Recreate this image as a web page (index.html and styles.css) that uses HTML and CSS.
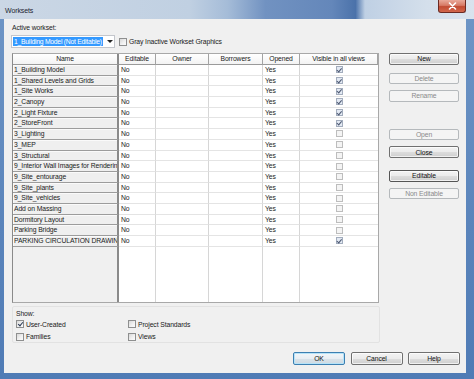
FILE: index.html
```html
<!DOCTYPE html>
<html lang="en">
<head>
    <meta charset="UTF-8">
    <title>Worksets</title>
    <link rel="stylesheet" href="styles.css">
</head>
<body>

    <div class="window">
        <div class="titlebar">
            <span class="title">Worksets</span>
            <div class="close-btn">
                <svg width="9" height="8" viewBox="0 0 9 8"><path d="M1.5 1 L7.5 7 M7.5 1 L1.5 7" stroke="#fff" stroke-width="1.6" stroke-linecap="round"/></svg>
            </div>
        </div>

        <div class="client">
            <div class="label">Active workset:</div>

            <div class="workset-row">
                <div class="combo">
                    <span class="combo-value">1_Building Model (Not Editable)</span>
                    <span class="combo-arrow"></span>
                </div>
                <div class="check"><span class="box"></span>Gray Inactive Workset Graphics</div>
            </div>

            <div class="main">
                <div class="grid">
                    <div class="row head">
                        <div class="c name">Name</div>
                        <div class="c">Editable</div>
                        <div class="c">Owner</div>
                        <div class="c">Borrowers</div>
                        <div class="c">Opened</div>
                        <div class="c">Visible in all views</div>
                    </div>
                    <div class="row"><div class="c name">1_Building Model</div><div class="c">No</div><div class="c"></div><div class="c"></div><div class="c">Yes</div><div class="c vis"><span class="tick on"></span></div></div>
                    <div class="row"><div class="c name">1_Shared Levels and Grids</div><div class="c">No</div><div class="c"></div><div class="c"></div><div class="c">Yes</div><div class="c vis"><span class="tick on"></span></div></div>
                    <div class="row"><div class="c name">1_Site Works</div><div class="c">No</div><div class="c"></div><div class="c"></div><div class="c">Yes</div><div class="c vis"><span class="tick on"></span></div></div>
                    <div class="row"><div class="c name">2_Canopy</div><div class="c">No</div><div class="c"></div><div class="c"></div><div class="c">Yes</div><div class="c vis"><span class="tick on"></span></div></div>
                    <div class="row"><div class="c name">2_Light Fixture</div><div class="c">No</div><div class="c"></div><div class="c"></div><div class="c">Yes</div><div class="c vis"><span class="tick on"></span></div></div>
                    <div class="row"><div class="c name">2_StoreFront</div><div class="c">No</div><div class="c"></div><div class="c"></div><div class="c">Yes</div><div class="c vis"><span class="tick on"></span></div></div>
                    <div class="row"><div class="c name">3_Lighting</div><div class="c">No</div><div class="c"></div><div class="c"></div><div class="c">Yes</div><div class="c vis"><span class="tick"></span></div></div>
                    <div class="row"><div class="c name">3_MEP</div><div class="c">No</div><div class="c"></div><div class="c"></div><div class="c">Yes</div><div class="c vis"><span class="tick"></span></div></div>
                    <div class="row"><div class="c name">3_Structural</div><div class="c">No</div><div class="c"></div><div class="c"></div><div class="c">Yes</div><div class="c vis"><span class="tick"></span></div></div>
                    <div class="row"><div class="c name">9_Interior Wall Images for Rendering</div><div class="c">No</div><div class="c"></div><div class="c"></div><div class="c">Yes</div><div class="c vis"><span class="tick"></span></div></div>
                    <div class="row"><div class="c name">9_Site_entourage</div><div class="c">No</div><div class="c"></div><div class="c"></div><div class="c">Yes</div><div class="c vis"><span class="tick"></span></div></div>
                    <div class="row"><div class="c name">9_Site_plants</div><div class="c">No</div><div class="c"></div><div class="c"></div><div class="c">Yes</div><div class="c vis"><span class="tick"></span></div></div>
                    <div class="row"><div class="c name">9_Site_vehicles</div><div class="c">No</div><div class="c"></div><div class="c"></div><div class="c">Yes</div><div class="c vis"><span class="tick"></span></div></div>
                    <div class="row"><div class="c name">Add on Massing</div><div class="c">No</div><div class="c"></div><div class="c"></div><div class="c">Yes</div><div class="c vis"><span class="tick"></span></div></div>
                    <div class="row"><div class="c name">Dormitory Layout</div><div class="c">No</div><div class="c"></div><div class="c"></div><div class="c">Yes</div><div class="c vis"><span class="tick"></span></div></div>
                    <div class="row"><div class="c name">Parking Bridge</div><div class="c">No</div><div class="c"></div><div class="c"></div><div class="c">Yes</div><div class="c vis"><span class="tick"></span></div></div>
                    <div class="row"><div class="c name">PARKING CIRCULATION DRAWING</div><div class="c">No</div><div class="c"></div><div class="c"></div><div class="c">Yes</div><div class="c vis"><span class="tick on"></span></div></div>
                    <div class="row filler">
                        <div class="c name"></div><div class="c"></div><div class="c"></div><div class="c"></div><div class="c"></div><div class="c"></div>
                    </div>
                </div>

                <div class="side-buttons">
                    <button class="btn">New</button>
                    <button class="btn gap-small" disabled>Delete</button>
                    <button class="btn" disabled>Rename</button>
                    <button class="btn gap-big" disabled>Open</button>
                    <button class="btn">Close</button>
                    <button class="btn gap-mid focus">Editable</button>
                    <button class="btn" disabled>Non Editable</button>
                </div>
            </div>

            <div class="show-group">
                <div class="show-title">Show:</div>
                <div class="show-options">
                    <div class="check"><span class="box checked"></span>User-Created</div>
                    <div class="check"><span class="box"></span>Project Standards</div>
                    <div class="check"><span class="box"></span>Families</div>
                    <div class="check"><span class="box"></span>Views</div>
                </div>
            </div>

            <div class="dialog-buttons">
                <button class="btn default">OK</button>
                <button class="btn">Cancel</button>
                <button class="btn">Help</button>
            </div>
        </div>
    </div>

</body>
</html>
```

FILE: styles.css
```css
/* Page reset */
html, body {
    margin: 0;
    padding: 0;
    width: 474px;
    height: 379px;
    overflow: hidden;
    font-family: "Liberation Sans", Arial, sans-serif;
    font-size: 6.8px;
    letter-spacing: -0.1px;
    color: #1a1a1a;
}

/* Window frame (Aero style) */
.window {
    width: 474px;
    height: 379px;
    display: flex;
    flex-direction: column;
    background: linear-gradient(to bottom, #6f96c6 0%, #5a84bb 60%, #4f7bb5 100%);
}

.titlebar {
    height: 19px;
    flex: none;
    display: flex;
    align-items: center;
    padding-left: 5px;
    position: relative;
    background: linear-gradient(to right, #cbd7e5 0%, #c0d0e2 40%, #a5bcd8 48%, #7192c1 56%, #6487ba 70%, #4b72aa 75%, #bfd0e4 77%, #d4dfeb 90%, #d9e3ee 100%);
}

.title {
    font-size: 7px;
    color: #1c2430;
    padding-top: 1px;
}

.close-btn {
    position: absolute;
    top: 0;
    left: 438px;
    width: 28px;
    height: 13px;
    border: 1px solid #6b2a22;
    border-top: none;
    border-radius: 0 0 3px 3px;
    box-sizing: border-box;
    background: linear-gradient(to bottom, #e9a99a 0%, #d77a66 45%, #c24b33 55%, #d2674c 100%);
    display: flex;
    justify-content: center;
    align-items: center;
}

/* Dialog client area */
.client {
    flex: 1;
    margin: 0 8px 6px 4px;
    background: #f0f0f0;
    padding: 4px 6px 0 8px;
    box-sizing: border-box;
    display: flex;
    flex-direction: column;
}

.label {
    line-height: 9px;
    height: 9px;
}

/* Active workset row */
.workset-row {
    margin-top: 3px;
    height: 13px;
    display: flex;
    align-items: center;
}

.combo {
    width: 104px;
    height: 13px;
    margin-left: -1px;
    box-sizing: border-box;
    border: 1px solid #c3c6cc;
    background: #fff;
    display: flex;
    align-items: center;
    padding: 1px;
}

.combo-value {
    background: #3399ff;
    color: #fff;
    height: 9px;
    line-height: 9px;
    width: 91px;
    padding-left: 1px;
    letter-spacing: -0.25px;
    white-space: nowrap;
    overflow: hidden;
    box-sizing: border-box;
}

.combo-arrow {
    margin-left: 4px;
    width: 0;
    height: 0;
    border-left: 3px solid transparent;
    border-right: 3px solid transparent;
    border-top: 3px solid #222;
}

.check {
    display: flex;
    align-items: center;
    white-space: nowrap;
}

.workset-row .check {
    margin-left: 4px;
}

.box {
    width: 8px;
    height: 8px;
    box-sizing: border-box;
    border: 1px solid #8e8f8f;
    background: linear-gradient(135deg, #d8d8d8 0%, #f2f2f2 60%, #fbfbfb 100%);
    margin-right: 2px;
    position: relative;
    flex: none;
}

.box.checked::after,
.tick.on::after {
    content: "";
    position: absolute;
    left: 2px;
    top: 0px;
    width: 2px;
    height: 4px;
    border-right: 1px solid #2b3a55;
    border-bottom: 1px solid #2b3a55;
    transform: rotate(40deg);
}

/* Main area: grid + buttons */
.main {
    margin-top: 5px;
    height: 250px;
    display: flex;
    gap: 10px;
}

.grid {
    width: 367px;
    height: 250px;
    box-sizing: border-box;
    border: 1px solid #a8a8a8;
    border-left-color: #8a8a8a;
    background: #fff;
    display: flex;
    flex-direction: column;
}

.row {
    display: grid;
    grid-template-columns: 106px 37px 53px 54px 37px 1fr;
    height: 10.7px;
    flex: none;
}

.row.head {
    height: 11px;
}

.row.filler {
    flex: 1;
}

.c {
    box-sizing: border-box;
    border-right: 1px solid #d6d6d6;
    border-bottom: 1px solid #e4e4e4;
    padding-left: 2px;
    line-height: 10px;
    white-space: nowrap;
    overflow: hidden;
}

.c:last-child {
    border-right: none;
}

.c.name {
    background: #efefef;
    border-right: 2px solid #8a8a8a;
    border-bottom: 1px solid #9c9c9c;
    box-shadow: inset 1px 1px 0 #fafafa;
    padding-left: 1px;
}

.head .c {
    background: linear-gradient(to bottom, #ffffff 0%, #f3f3f3 100%);
    border-right: 1px solid #a3a3a3;
    border-bottom: 1px solid #9a9a9a;
    text-align: center;
    padding-left: 0;
    box-shadow: none;
}

.head .c.name {
    border-right: 2px solid #8a8a8a;
}

.filler .c {
    border-bottom: none;
}

.filler .c.name {
    background: #f0f0f0;
    box-shadow: none;
}

.vis {
    display: flex;
    justify-content: center;
    align-items: center;
    padding-left: 0;
}

.tick {
    width: 7px;
    height: 7px;
    box-sizing: border-box;
    border: 1px solid #bdbdbd;
    background: #f4f4f4;
    position: relative;
}

.tick.on {
    border-color: #a3adbd;
    background: #e3e9f3;
}

.tick.on::after {
    left: 1.5px;
    top: -0.5px;
    width: 1.5px;
    height: 3.5px;
    border-color: #4a5670;
}

/* Buttons */
.btn {
    font-family: "Liberation Sans", Arial, sans-serif;
    font-size: 6.8px;
    letter-spacing: -0.1px;
    color: #111;
    padding: 0;
    margin: 0;
    border: 1px solid #707070;
    border-radius: 2px;
    background: linear-gradient(to bottom, #f3f3f3 0%, #ebebeb 50%, #dddddd 51%, #cfcfcf 100%);
    box-shadow: inset 0 0 0 1px rgba(255, 255, 255, 0.7);
    box-sizing: border-box;
}

.btn:disabled {
    border-color: #b5b9bc;
    background: #f4f4f4;
    color: #8a8a8a;
    box-shadow: none;
}

.side-buttons {
    width: 70px;
    display: flex;
    flex-direction: column;
    gap: 6px;
}

.side-buttons .btn {
    height: 11.6px;
    line-height: 9px;
}

.side-buttons .gap-small {
    margin-top: 2px;
}

.side-buttons .gap-big {
    margin-top: 21px;
}

.side-buttons .gap-mid {
    margin-top: 6px;
}

.btn.focus {
    border-color: #555;
}

/* Show group */
.show-group {
    margin-top: 3px;
    width: 368px;
    height: 37px;
    box-sizing: border-box;
    border: 1px solid #e2e2e2;
    border-radius: 2px;
    padding: 2px 0 0 3px;
}

.show-title {
    line-height: 9px;
    height: 9px;
}

.show-options {
    display: grid;
    grid-template-columns: 112px auto;
    grid-auto-rows: 12.6px;
}

/* OK / Cancel / Help */
.dialog-buttons {
    margin-top: 9px;
    display: flex;
    justify-content: flex-end;
    gap: 5.5px;
}

.dialog-buttons .btn {
    width: 52px;
    height: 13px;
}

.btn.default {
    border-color: #3c7fb1;
    box-shadow: inset 0 0 0 1px #b6e3f8;
    background: linear-gradient(to bottom, #f2f6f9 0%, #e8eef3 50%, #d9e3ea 51%, #cfd9e1 100%);
}
```
